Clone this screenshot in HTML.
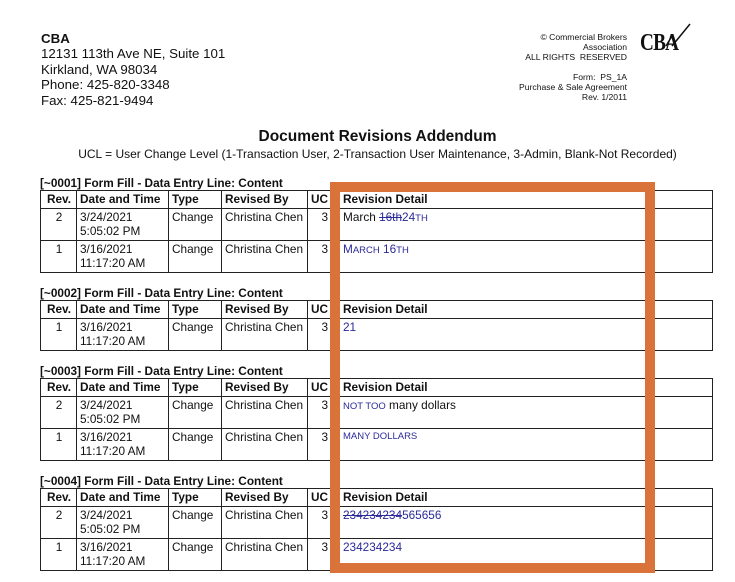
<!DOCTYPE html>
<html><head><meta charset="utf-8"><style>
*{margin:0;padding:0;box-sizing:border-box}
body{width:735px;height:582px;background:#fff;position:relative;overflow:hidden;font-family:"Liberation Sans",Arial,sans-serif;color:#111}
.a{position:absolute}
.addr{left:41px;top:31px;font-size:13.3px;line-height:15.4px}
.rt{font-size:8.6px;line-height:10px;text-align:right}
.sec{font-size:11.8px;font-weight:bold;left:40px;white-space:nowrap}
table{position:absolute;left:40px;width:673px;border-collapse:collapse;font-size:11.8px;table-layout:fixed}
td,th{border:1px solid #222;vertical-align:top;padding:1px 2px 1px 3px;line-height:14px;text-align:left;white-space:nowrap;overflow:hidden}
table{border:1.5px solid #444}
th{font-weight:bold;height:18px}
td{height:32px}
td:last-child,th:last-child{padding-left:11px}
.c{text-align:center}.r{text-align:right;padding-right:3px}
.b{color:#2a2a9a}
.sc{font-size:9.5px}
s{text-decoration-color:#2a2a9a}
</style></head><body>
<div class="a addr"><b>CBA</b><br>12131 113th Ave NE, Suite 101<br>Kirkland, WA 98034<br>Phone: 425-820-3348<br>Fax: 425-821-9494</div>
<div class="a rt" style="right:108px;top:32px">© Commercial Brokers<br>Association<br>ALL RIGHTS&nbsp; RESERVED</div>
<div class="a rt" style="right:108px;top:72px">Form:&nbsp; PS_1A<br>Purchase &amp; Sale Agreement<br>Rev. 1/2011</div>
<div class="a" style="left:640px;top:30px;font-family:'Liberation Serif',serif;font-weight:bold;font-size:24px;transform:scaleX(0.8);transform-origin:left;letter-spacing:-1px">CBA</div>
<svg class="a" style="left:660px;top:22px" width="32" height="32"><path d="M6 24 L12 14 M12 24 L30 2" stroke="#111" stroke-width="1.5" fill="none"/></svg>
<div class="a" style="left:0;width:755px;top:128px;text-align:center;font-size:15.5px;font-weight:bold">Document Revisions Addendum</div>
<div class="a" style="left:0;width:755px;top:147px;text-align:center;font-size:12px">UCL = User Change Level (1-Transaction User, 2-Transaction User Maintenance, 3-Admin, Blank-Not Recorded)</div>

<div class="a sec" style="top:176px">[~0001] Form Fill - Data Entry Line: Content</div>
<table style="top:190px"><colgroup><col style="width:36px"><col style="width:92px"><col style="width:53px"><col style="width:86px"><col style="width:24px"><col></colgroup>
<tr><th class="c">Rev.</th><th>Date and Time</th><th>Type</th><th>Revised By</th><th>UC</th><th>Revision Detail</th></tr>
<tr><td class="c">2</td><td>3/24/2021<br>5:05:02 PM</td><td>Change</td><td>Christina Chen</td><td class="r">3</td><td>March <s class="b">16th</s><span class="b">24<span class="sc">TH</span></span></td></tr>
<tr><td class="c">1</td><td>3/16/2021<br>11:17:20 AM</td><td>Change</td><td>Christina Chen</td><td class="r">3</td><td class="b">M<span class="sc">ARCH</span> 16<span class="sc">TH</span></td></tr>
</table>

<div class="a sec" style="top:286px">[~0002] Form Fill - Data Entry Line: Content</div>
<table style="top:300px"><colgroup><col style="width:36px"><col style="width:92px"><col style="width:53px"><col style="width:86px"><col style="width:24px"><col></colgroup>
<tr><th class="c">Rev.</th><th>Date and Time</th><th>Type</th><th>Revised By</th><th>UC</th><th>Revision Detail</th></tr>
<tr><td class="c">1</td><td>3/16/2021<br>11:17:20 AM</td><td>Change</td><td>Christina Chen</td><td class="r">3</td><td class="b">21</td></tr>
</table>

<div class="a sec" style="top:364px">[~0003] Form Fill - Data Entry Line: Content</div>
<table style="top:378px"><colgroup><col style="width:36px"><col style="width:92px"><col style="width:53px"><col style="width:86px"><col style="width:24px"><col></colgroup>
<tr><th class="c">Rev.</th><th>Date and Time</th><th>Type</th><th>Revised By</th><th>UC</th><th>Revision Detail</th></tr>
<tr><td class="c">2</td><td>3/24/2021<br>5:05:02 PM</td><td>Change</td><td>Christina Chen</td><td class="r">3</td><td><span class="b sc">NOT TOO</span> many dollars</td></tr>
<tr><td class="c">1</td><td>3/16/2021<br>11:17:20 AM</td><td>Change</td><td>Christina Chen</td><td class="r">3</td><td class="b sc">MANY DOLLARS</td></tr>
</table>

<div class="a sec" style="top:474px">[~0004] Form Fill - Data Entry Line: Content</div>
<table style="top:488px"><colgroup><col style="width:36px"><col style="width:92px"><col style="width:53px"><col style="width:86px"><col style="width:24px"><col></colgroup>
<tr><th class="c">Rev.</th><th>Date and Time</th><th>Type</th><th>Revised By</th><th>UC</th><th>Revision Detail</th></tr>
<tr><td class="c">2</td><td>3/24/2021<br>5:05:02 PM</td><td>Change</td><td>Christina Chen</td><td class="r">3</td><td class="b"><s>234234234</s>565656</td></tr>
<tr><td class="c">1</td><td>3/16/2021<br>11:17:20 AM</td><td>Change</td><td>Christina Chen</td><td class="r">3</td><td class="b">234234234</td></tr>
</table>

<div class="a" style="left:330px;top:182px;width:325px;height:391px;border:10px solid #d9733a"></div>
</body></html>
